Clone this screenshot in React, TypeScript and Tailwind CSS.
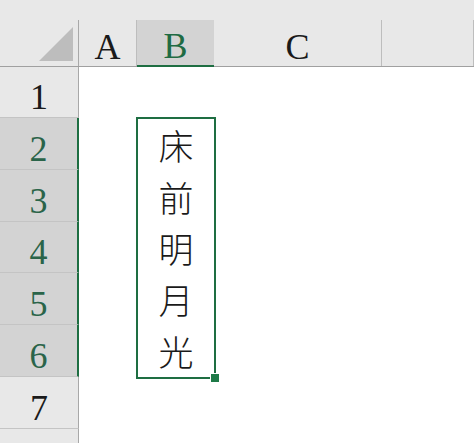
const green = 'border-[#1e6e42]';

const cols = [
  { label: 'A', w: 'w-[58px]', sel: false },
  { label: 'B', w: 'w-[77px]', sel: true },
  { label: 'C', w: 'w-[168px]', sel: false },
  { label: '', w: 'flex-1', sel: false },
];

const rows = [
  { n: '1', h: 'h-[51px]', sel: false },
  { n: '2', h: 'h-[52px]', sel: true },
  { n: '3', h: 'h-[52px]', sel: true },
  { n: '4', h: 'h-[51px]', sel: true },
  { n: '5', h: 'h-[52px]', sel: true },
  { n: '6', h: 'h-[52px]', sel: true },
  { n: '7', h: 'h-[52px]', sel: false },
  { n: '', h: 'h-[52px]', sel: false },
];

const chars = ['床', '前', '明', '月', '光'];

export default function App() {
  return (
    <div className="w-[474px] h-[443px] overflow-hidden bg-white font-['Liberation_Serif',serif] text-[36px] leading-none">
      {/* column headers */}
      <div className="h-[20px] bg-[#e8e8e8]" />
      <div className="flex h-[47px] bg-[#e8e8e8] border-b border-[#a0a0a0]">
        <div className="w-[79px] shrink-0 border-r border-[#a8a8a8] flex items-end justify-end pr-[5px] pb-[5px]">
          <svg width="34" height="34" viewBox="0 0 34 34">
            <polygon points="34,0 34,34 0,34" fill="#bdbdbd" />
          </svg>
        </div>
        {cols.map((c) => (
          <div
            key={c.label || 'x'}
            className={
              c.w +
              ' shrink-0 flex items-center justify-center pt-[7px] ' +
              (c.sel
                ? 'bg-[#d3d3d3] text-[#1f6b43] border-b-2 border-b-[#1e6e42] -mb-px'
                : 'text-[#1a1a1a] border-r border-[#bdbdbd]')
            }
          >
            {c.label}
          </div>
        ))}
      </div>

      {/* body */}
      <div className="flex">
        <div className="w-[79px] shrink-0 flex flex-col">
          {rows.map((r, i) => (
            <div
              key={i}
              className={
                r.h +
                ' flex items-center justify-center pt-[10px] border-b border-b-[#c4c4c4] ' +
                (r.sel
                  ? 'bg-[#d3d3d3] text-[#2a6449] border-r-2 border-r-[#1e6e42]'
                  : 'bg-[#e8e8e8] text-[#1a1a1a] border-r border-r-[#a8a8a8]')
              }
            >
              {r.n}
            </div>
          ))}
        </div>

        <div className="w-[58px] shrink-0" />

        <div className="w-[77px] shrink-0 pt-[50px]">
          <div className={'relative -ml-px w-[80px] h-[262px] border-[2.5px] ' + green + ' flex flex-col font-["Noto_Sans_CJK_SC",sans-serif] font-light text-[35px] text-[#1a1a1a]'}>
            {chars.map((ch) => (
              <div key={ch} className="h-[51.4px] flex items-center justify-center">
                {ch}
              </div>
            ))}
            <div className="absolute -right-[6px] -bottom-[6px] w-[8px] h-[8px] bg-[#1e7a47] border border-white box-content" />
          </div>
        </div>
      </div>
    </div>
  );
}
